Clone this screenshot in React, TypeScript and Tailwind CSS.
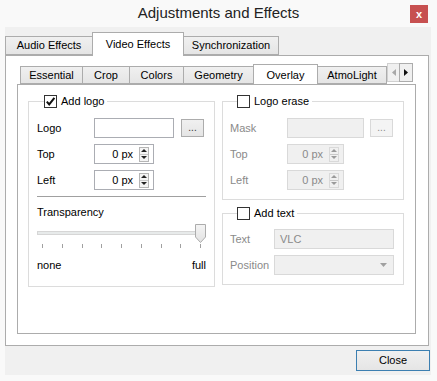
import React from 'react';

const disabledText = 'text-[#8a8a8a]';

function CheckBox({ checked }: { checked?: boolean }) {
  return (
    <span className="flex h-[13px] w-[13px] shrink-0 items-center justify-center border border-[#333] bg-white">
      {checked && (
        <svg width="11" height="11" viewBox="0 0 11 11">
          <path d="M1.8 5.6 L4.2 8.4 L9.4 1.8" fill="none" stroke="#111" strokeWidth="2" />
        </svg>
      )}
    </span>
  );
}

function Group({
  title,
  checked,
  className,
  children,
}: {
  title: string;
  checked?: boolean;
  className?: string;
  children: React.ReactNode;
}) {
  return (
    <div className={`border border-[#dcdcdc] ${className ?? ''}`}>
      <div className="-mt-[7px] ml-[7px] flex h-[13px] w-fit items-center gap-[4px] bg-white pr-[3px]">
        <CheckBox checked={checked} />
        <span className="text-[11px] leading-[13px] text-black">{title}</span>
      </div>
      {children}
    </div>
  );
}

function TextBox({ w, disabled, value }: { w: string; disabled?: boolean; value?: string }) {
  return (
    <div
      className={`flex h-[20px] items-center border px-[5px] ${w} ${
        disabled ? `border-[#d9d9d9] bg-[#f0f0f0] ${disabledText}` : 'border-[#abadb3] bg-white'
      }`}
    >
      {value}
    </div>
  );
}

function DotsButton({ disabled }: { disabled?: boolean }) {
  return (
    <div
      className={`flex h-[18px] w-[23px] items-end justify-center border pb-[3px] text-[10px] leading-[10px] ${
        disabled
          ? `border-[#d9d9d9] bg-[#f4f4f4] ${disabledText}`
          : 'border-[#acacac] bg-gradient-to-b from-[#f0f0f0] to-[#e5e5e5] text-[#333]'
      }`}
    >
      ...
    </div>
  );
}

function SpinArrows({ disabled }: { disabled?: boolean }) {
  const c = disabled ? '#9a9a9a' : '#222';
  return (
    <div
      className={`mr-[4px] flex h-[15px] w-[10px] flex-col border ${
        disabled ? 'border-[#d9d9d9] bg-[#f0f0f0]' : 'border-[#b5b5b5] bg-[#f4f4f4]'
      }`}
    >
      <div className="flex flex-1 items-center justify-center border-b border-[#c8c8c8]">
        <svg width="6" height="3" viewBox="0 0 6 3">
          <path d="M0 3 L3 0 L6 3 Z" fill={c} />
        </svg>
      </div>
      <div className="flex flex-1 items-center justify-center">
        <svg width="6" height="3" viewBox="0 0 6 3">
          <path d="M0 0 L6 0 L3 3 Z" fill={c} />
        </svg>
      </div>
    </div>
  );
}

function Spin({ w, disabled }: { w: string; disabled?: boolean }) {
  return (
    <div
      className={`flex h-[20px] items-center border ${w} ${
        disabled ? `border-[#d9d9d9] bg-[#f0f0f0] ${disabledText}` : 'border-[#abadb3] bg-white'
      }`}
    >
      <span className="flex-1 pr-[6px] text-right">0 px</span>
      <SpinArrows disabled={disabled} />
    </div>
  );
}

function Row({
  label,
  labelW,
  disabled,
  children,
}: {
  label: string;
  labelW: string;
  disabled?: boolean;
  children: React.ReactNode;
}) {
  return (
    <div className="flex h-[20px] items-center">
      <span className={`${labelW} ${disabled ? disabledText : 'text-black'}`}>{label}</span>
      {children}
    </div>
  );
}

function Slider() {
  return (
    <div className="relative mt-[4px] h-[26px]">
      <div className="absolute left-0 right-0 top-[8px] h-[4px] border border-[#d6d6d6] bg-[#e7eaea]" />
      <svg className="absolute right-0 top-px" width="11" height="19" viewBox="0 0 11 19">
        <defs>
          <linearGradient id="hg" x1="0" y1="0" x2="0" y2="1">
            <stop offset="0" stopColor="#f4f4f4" />
            <stop offset="1" stopColor="#e2e2e2" />
          </linearGradient>
        </defs>
        <path d="M0.5 0.5 H10.5 V13 L5.5 18.5 L0.5 13 Z" fill="url(#hg)" stroke="#acacac" />
      </svg>
      <div className="absolute bottom-px left-0 right-0 flex justify-between px-[5px]">
        {Array.from({ length: 9 }).map((_, i) => (
          <span key={i} className="h-[4px] w-px bg-[#a0a0a0]" />
        ))}
      </div>
    </div>
  );
}

function TopTab({ label, active, w }: { label: string; active?: boolean; w: string }) {
  return (
    <div
      className={`flex items-center justify-center border border-[#acacac] ${w} ${
        active
          ? 'relative z-10 -mb-px h-[24px] border-b-0 bg-white'
          : 'h-[19px] bg-gradient-to-b from-[#f0f0f0] to-[#e5e5e5]'
      } -ml-px first:ml-0`}
    >
      {label}
    </div>
  );
}

function InnerTab({ label, active, w }: { label: string; active?: boolean; w: string }) {
  return (
    <div
      className={`flex shrink-0 items-center justify-center border border-[#acacac] ${w} ${
        active
          ? 'relative z-10 -mb-px h-[21px] border-b-0 bg-white'
          : 'h-[18px] bg-gradient-to-b from-[#f0f0f0] to-[#e5e5e5]'
      } -ml-px first:ml-0`}
    >
      {label}
    </div>
  );
}

export default function App() {
  return (
    <div className="h-[381px] w-[437px] bg-[#f9f9f9] font-['Liberation_Sans',Arial,sans-serif] text-[11px] text-black">
      {/* title bar */}
      <div className="flex h-[27px] items-start">
        <div className="w-[27px]" />
        <div className="flex-1 pt-[4px] text-center text-[15px] leading-[18px] text-[#222]">
          Adjustments and Effects
        </div>
        <div className="mr-[9px] mt-[5px] flex h-[18px] w-[18px] items-center justify-center bg-[#c75050] text-[11px] font-bold leading-none text-white">
          x
        </div>
      </div>

      {/* client */}
      <div className="ml-[5px] mr-[6px] bg-[#f0f0f0]">
        <div className="flex items-end pt-[5px]">
          <TopTab label="Audio Effects" w="w-[88px]" />
          <TopTab label="Video Effects" w="w-[92px]" active />
          <TopTab label="Synchronization" w="w-[96px]" />
        </div>

        <div className="mr-[2px] h-[291px] border border-[#acacac] bg-white pl-[11px] pr-[12px] pt-[7px]">
          {/* inner tabs */}
          <div className="flex items-end">
            <div className="flex items-end overflow-hidden pl-[3px]">
              <InnerTab label="Essential" w="w-[63px]" />
              <InnerTab label="Crop" w="w-[48px]" />
              <InnerTab label="Colors" w="w-[55px]" />
              <InnerTab label="Geometry" w="w-[71px]" />
              <InnerTab label="Overlay" w="w-[65px]" active />
              <InnerTab label="AtmoLight" w="w-[70px]" />
            </div>
            <div className="mb-[2px] flex">
              <div className="flex h-[19px] w-[13px] items-center justify-center border border-[#d0d0d0] bg-[#f0f0f0]">
                <svg width="4" height="7" viewBox="0 0 4 7">
                  <path d="M4 0 L0 3.5 L4 7 Z" fill="#a8a8a8" />
                </svg>
              </div>
              <div className="-ml-px flex h-[19px] w-[14px] items-center justify-center border border-[#acacac] bg-[#f0f0f0]">
                <svg width="4" height="7" viewBox="0 0 4 7">
                  <path d="M0 0 L4 3.5 L0 7 Z" fill="#111" />
                </svg>
              </div>
            </div>
          </div>

          <div className="h-[250px] border border-[#acacac] bg-white px-[10px] pt-[16px]">
            <div className="flex items-start gap-[7px]">
              {/* left column */}
              <Group title="Add logo" checked className="w-[187px] px-[8px] pb-[14px]">
                <div className="mt-[10px] flex flex-col gap-[6px]">
                  <Row label="Logo" labelW="w-[57px]">
                    <TextBox w="w-[80px]" />
                    <div className="ml-[7px]">
                      <DotsButton />
                    </div>
                  </Row>
                  <Row label="Top" labelW="w-[57px]">
                    <Spin w="w-[60px]" />
                  </Row>
                  <Row label="Left" labelW="w-[57px]">
                    <Spin w="w-[60px]" />
                  </Row>
                </div>
                <div className="mt-[6px] h-px bg-[#a0a0a0]" />
                <div className="mt-[9px] leading-[13px]">Transparency</div>
                <Slider />
                <div className="mt-[10px] flex justify-between leading-[13px]">
                  <span>none</span>
                  <span>full</span>
                </div>
              </Group>

              {/* right column */}
              <div className="flex w-[182px] flex-col gap-[13px]">
                <Group title="Logo erase" className="pl-[7px] pb-[9px]">
                  <div className="mt-[10px] flex flex-col gap-[6px]">
                    <Row label="Mask" labelW="w-[57px]" disabled>
                      <TextBox w="w-[77px]" disabled />
                      <div className="ml-[6px]">
                        <DotsButton disabled />
                      </div>
                    </Row>
                    <Row label="Top" labelW="w-[57px]" disabled>
                      <Spin w="w-[57px]" disabled />
                    </Row>
                    <Row label="Left" labelW="w-[57px]" disabled>
                      <Spin w="w-[57px]" disabled />
                    </Row>
                  </div>
                </Group>
                <Group title="Add text" className="pl-[7px] pb-[9px]">
                  <div className="mt-[9px] flex flex-col gap-[6px]">
                    <Row label="Text" labelW="w-[44px]" disabled>
                      <TextBox w="w-[120px]" disabled value="VLC" />
                    </Row>
                    <Row label="Position" labelW="w-[44px]" disabled>
                      <div className="flex h-[20px] w-[120px] items-center justify-end border border-[#d9d9d9] bg-[#f0f0f0] pr-[6px]">
                        <svg width="7" height="4" viewBox="0 0 7 4">
                          <path d="M0 0 L7 0 L3.5 4 Z" fill="#a0a0a0" />
                        </svg>
                      </div>
                    </Row>
                  </div>
                </Group>
              </div>
            </div>
          </div>
        </div>

        {/* bottom buttons */}
        <div className="flex h-[29px] items-center justify-end pr-[1px]">
          <div className="flex h-[21px] w-[74px] items-center justify-center border border-[#3c7fb1] bg-gradient-to-b from-[#f0f0f0] to-[#e5e5e5] text-[11px]">
            Close
          </div>
        </div>
      </div>
    </div>
  );
}
